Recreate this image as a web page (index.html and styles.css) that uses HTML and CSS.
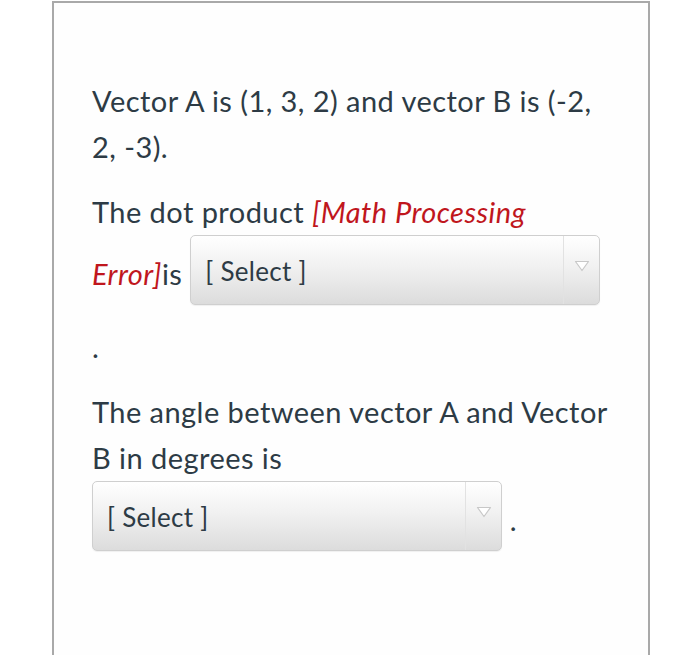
FILE: index.html
```html
<!DOCTYPE html>
<html>
<head>
<meta charset="utf-8">
<link rel="stylesheet" href="styles.css">
</head>
<body>
<div class="frame">
  <div class="question">
    <p class="para">Vector A is (1, 3, 2) and vector B is (-2, 2, -3).</p>
    <p class="para">The dot product <span class="math-error">[Math Processing</span> <span class="math-error">Error]</span>is <span class="select"><span class="select-text">[ Select ]</span><span class="select-arrow"><svg width="16" height="12" viewBox="0 0 16 12"><path d="M1.5 1.5 H14.5 L8 10.5 Z" fill="#ffffff" stroke="#c8c8c8" stroke-width="1.2" stroke-linejoin="round"/></svg></span></span> .</p>
    <p class="para">The angle between vector A and Vector B in degrees is <span class="select"><span class="select-text">[ Select ]</span><span class="select-arrow"><svg width="16" height="12" viewBox="0 0 16 12"><path d="M1.5 1.5 H14.5 L8 10.5 Z" fill="#ffffff" stroke="#c8c8c8" stroke-width="1.2" stroke-linejoin="round"/></svg></span></span> .</p>
  </div>
</div>
</body>
</html>
```

FILE: styles.css
```css
html, body {
  margin: 0;
  padding: 0;
  background: #ffffff;
  height: 100%;
  overflow: hidden;
}

.frame {
  box-sizing: border-box;
  margin: 1px 0 0 52px;
  width: 598px;
  height: 654px;
  border: 2px solid #a9a9a9;
  border-bottom: none;
  background: #fefefe;
  padding: 0 36px 0 38px;
}

.question {
  padding-top: 75px;
  font-family: Lato, "Noto Sans", sans-serif;
  font-size: 29px;
  letter-spacing: 0.45px;
  line-height: 46px;
  color: #2d3b45;
}

.para {
  margin: 0 0 19px 0;
}

.math-error {
  color: #c0161d;
  font-style: italic;
}

.select {
  display: inline-flex;
  box-sizing: border-box;
  width: 410px;
  height: 70px;
  margin-bottom: 19px;
  vertical-align: 4px;
  border: 1px solid #cfcfcf;
  border-radius: 5px;
  background: linear-gradient(to bottom, #ffffff 0%, #f1f1f1 45%, #dcdcdc 100%);
  box-shadow: 0 1px 1px rgba(0, 0, 0, 0.06);
  line-height: 1;
  letter-spacing: 0.3px;
}

.select-text {
  flex: 1;
  padding: 22px 0 0 14px;
  font-size: 26px;
  color: #2d3b45;
}

.select-arrow {
  width: 36px;
  display: flex;
  align-items: flex-start;
  justify-content: center;
  padding-top: 24px;
  box-sizing: border-box;
  border-left: 1px solid #e2e2e2;
}
```
